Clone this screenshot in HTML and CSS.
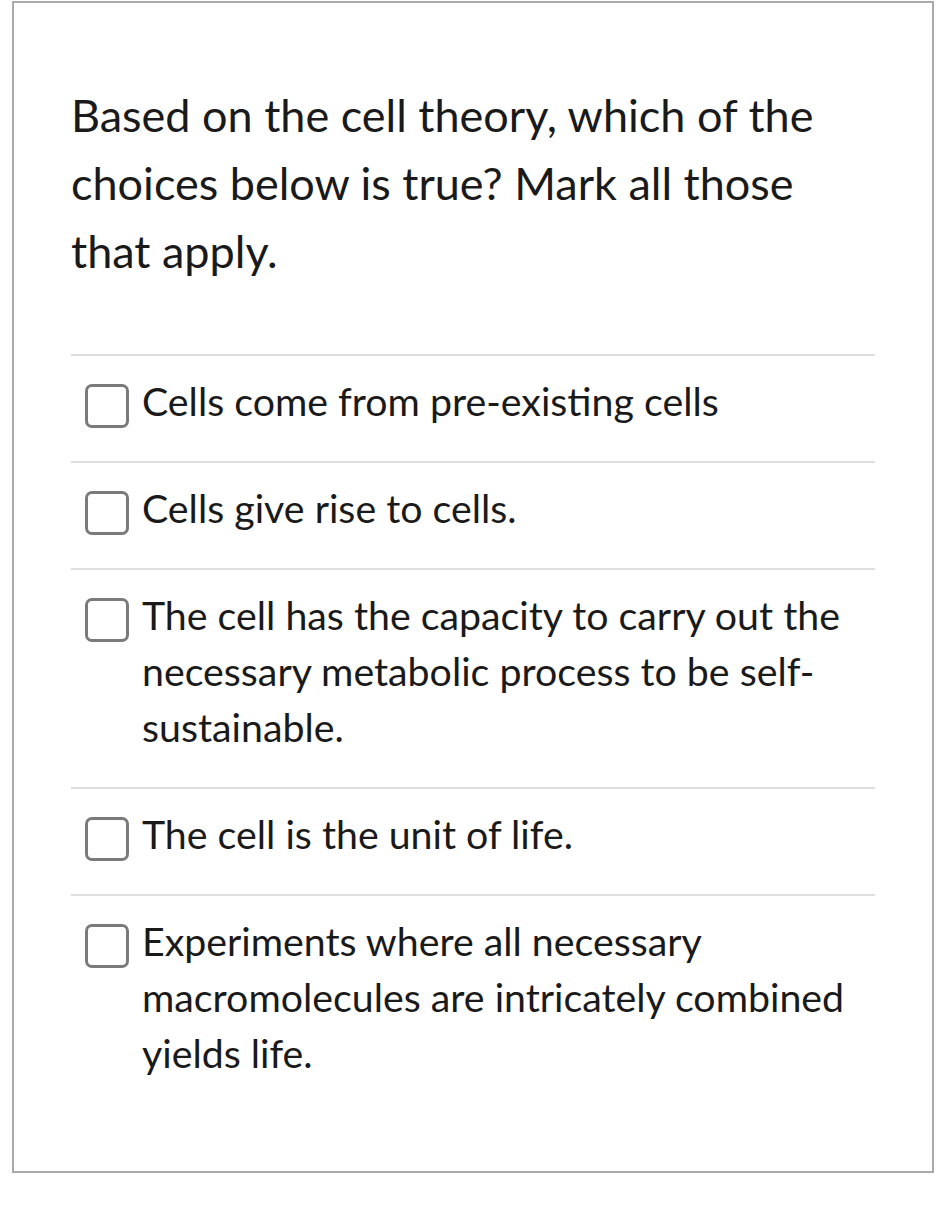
FILE: index.html
```html
<!DOCTYPE html>
<html>
<head>
<meta charset="utf-8">
<link rel="stylesheet" href="styles.css">
</head>
<body>
<div class="card">
  <div class="question">Based on the cell theory, which of the choices below is true? Mark all those that apply.</div>
  <ul class="answers">
    <li class="answer"><span class="box"></span><span class="label">Cells come from pre-existing cells</span></li>
    <li class="answer"><span class="box"></span><span class="label">Cells give rise to cells.</span></li>
    <li class="answer"><span class="box"></span><span class="label">The cell has the capacity to carry out the necessary metabolic process to be self-sustainable.</span></li>
    <li class="answer"><span class="box"></span><span class="label">The cell is the unit of life.</span></li>
    <li class="answer"><span class="box"></span><span class="label">Experiments where all necessary macromolecules are intricately combined yields life.</span></li>
  </ul>
</div>
</body>
</html>
```

FILE: styles.css
```css
html, body {
  margin: 0;
  padding: 0;
  background: #fff;
}
body {
  font-family: Lato, "Noto Sans", sans-serif;
  color: #1a1a1a;
  padding: 1px 3px 0 12px;
}
.card {
  width: 922px;
  box-sizing: border-box;
  border: 2px solid #aaaaaa;
  padding: 78px 57px 58px 57px;
}
.question {
  font-size: 45px;
  line-height: 68px;
  margin-bottom: 69px;
}
.answers {
  list-style: none;
  margin: 0;
  padding: 0;
}
.answer {
  display: flex;
  align-items: flex-start;
  gap: 13px;
  border-top: 2px solid #dedede;
  padding: 17px 0 32px 14px;
  font-size: 39.3px;
  line-height: 56px;
}
.box {
  flex: none;
  width: 44px;
  height: 44px;
  box-sizing: border-box;
  border: 3px solid #7a7a7a;
  border-radius: 7px;
  margin-top: 11px;
}
.label {
  flex: 1;
}
```
